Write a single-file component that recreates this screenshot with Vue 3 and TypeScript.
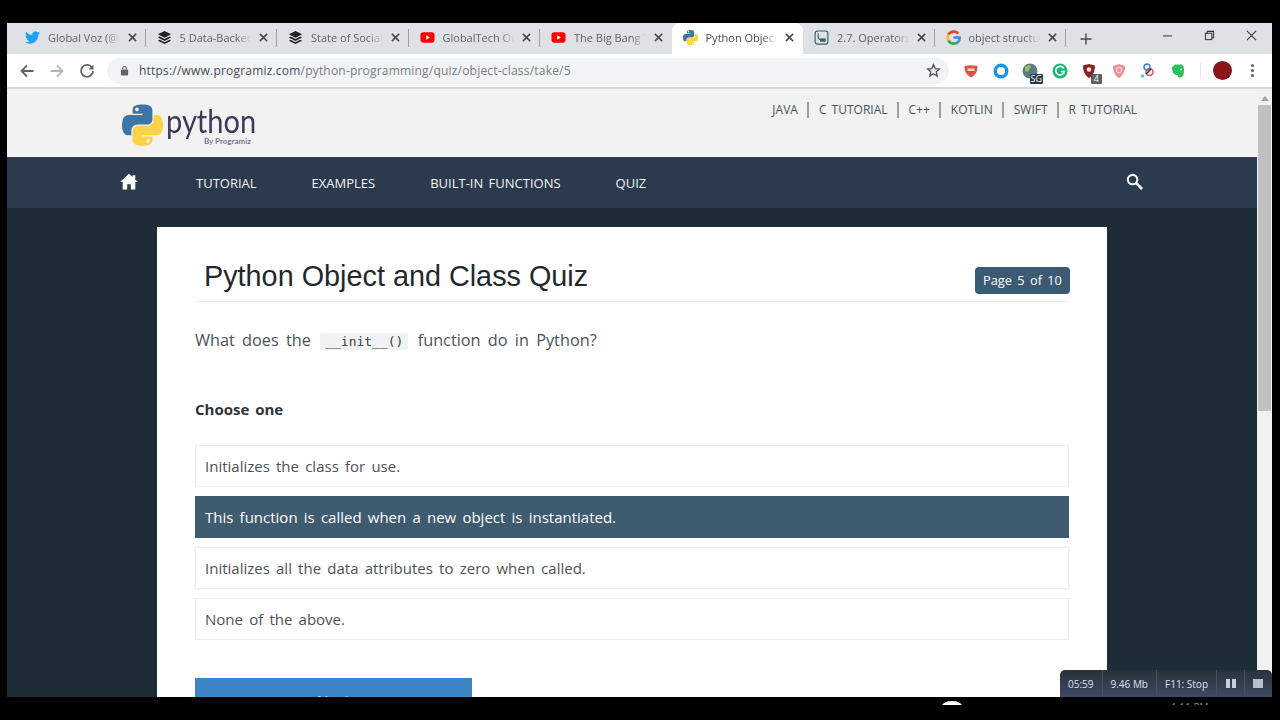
<script setup lang="ts">
interface Tab {
  title: string
  icon: string
  active?: boolean
}

const tabs: Tab[] = [
  { title: 'Global Voz (@GlobalVoz)', icon: 'twitter' },
  { title: '5 Data-Backed Tips', icon: 'layers' },
  { title: 'State of Social Media', icon: 'layers' },
  { title: 'GlobalTech Online', icon: 'youtube' },
  { title: 'The Big Bang Theory', icon: 'youtube' },
  { title: 'Python Object and Class', icon: 'python', active: true },
  { title: '2.7. Operators and', icon: 'book' },
  { title: 'object structure python', icon: 'google' }
]

const topLinks = ['JAVA', 'C TUTORIAL', 'C++', 'KOTLIN', 'SWIFT', 'R TUTORIAL']
const navLinks = ['TUTORIAL', 'EXAMPLES', 'BUILT-IN FUNCTIONS', 'QUIZ']
const answers = [
  'Initializes the class for use.',
  'This function is called when a new object is instantiated.',
  'Initializes all the data attributes to zero when called.',
  'None of the above.'
]
const selected = 1

const pyBlue = 'M54.9 0c-4.6 0-9 .4-12.8 1.1C30.8 3.1 28.7 7.3 28.7 15v10.2h26.8v3.4H18.6c-7.8 0-14.6 4.7-16.7 13.6-2.5 10.2-2.6 16.6 0 27.2 1.9 8 6.5 13.6 14.2 13.6h9.2V71c0-8.8 7.7-16.6 16.8-16.6h26.8c7.4 0 13.4-6.1 13.4-13.6V15c0-7.3-6.1-12.7-13.4-13.9C64.3.3 59.5 0 54.9 0zM40.4 8.2c2.8 0 5 2.3 5 5.1 0 2.8-2.3 5.1-5 5.1-2.8 0-5-2.3-5-5.1 0-2.8 2.3-5.1 5-5.1z'
const pyYellow = 'M85.6 28.7v11.9c0 9.2-7.8 17-16.7 17H42.1c-7.3 0-13.4 6.3-13.4 13.6v25.5c0 7.3 6.3 11.5 13.4 13.6 8.5 2.5 16.6 2.9 26.8 0 6.7-2 13.4-5.9 13.4-13.6V86.5H55.5v-3.4h40.2c7.8 0 10.7-5.4 13.4-13.6 2.8-8.4 2.7-16.5 0-27.2-1.9-7.8-5.6-13.6-13.4-13.6H85.6zM70.6 93.3c2.8 0 5 2.3 5 5.1 0 2.8-2.3 5.1-5 5.1-2.8 0-5-2.3-5-5.1 0-2.8 2.3-5.1 5-5.1z'
</script>

<template>
  <div class="screen">
    <div class="tabstrip">
      <div v-for="tab in tabs" :key="tab.title" class="tab" :class="{ 'tab-active': tab.active }">
        <svg class="favicon" viewBox="0 0 16 16">
          <path v-if="tab.icon === 'twitter'" fill="#1da1f2" d="M16 3c-.6.3-1.2.4-1.9.5.7-.4 1.2-1 1.4-1.8-.6.4-1.3.7-2.1.8A3.3 3.3 0 0 0 7.8 5.5 9.300 9.300 0 0 1 1.100 2.100a3.300 3.300 0 0 0 1 4.400c-.5 0-1-.2-1.500-.4 0 1.600 1.100 3 2.600 3.300-.5.1-1 .1-1.500 0 .4 1.300 1.600 2.200 3.100 2.300A6.600 6.600 0 0 1 0 13a9.300 9.300 0 0 0 14.300-8.300c.7-.4 1.200-1 1.700-1.700z" />
          <g v-else-if="tab.icon === 'layers'" fill="#222">
            <path d="M8 1 1 4.600 8 8.200l7-3.600z" />
            <path d="M2.800 7 1 8l7 3.600L15 8l-1.800-1L8 9.700z" />
            <path d="M2.800 10.400 1 11.400 8 15l7-3.600-1.800-1L8 13.100z" />
          </g>
          <g v-else-if="tab.icon === 'youtube'">
            <rect x="0.500" y="2.500" width="15" height="11" rx="3" fill="#f00" />
            <path d="M6.500 5.500v5l4.200-2.500z" fill="#fff" />
          </g>
          <g v-else-if="tab.icon === 'python'" transform="scale(.145)">
            <path :d="pyBlue" fill="#3a76a8" />
            <path :d="pyYellow" fill="#fcd346" />
          </g>
          <g v-else-if="tab.icon === 'book'" fill="none" stroke="#35606a" stroke-width="1.200">
            <rect x="1.200" y="1" width="13.600" height="14" rx="2.500" />
            <path d="M4.500 3.500v5l2 2" />
            <rect x="6.500" y="9" width="6" height="3.500" fill="#35606a" stroke="none" />
          </g>
          <g v-else fill="none" stroke-width="2.800">
            <path d="M13 3.700A6.600 6.600 0 0 0 2.500 5" stroke="#ea4335" />
            <path d="M2.500 5a6.600 6.600 0 0 0 0 6" stroke="#fbbc05" />
            <path d="M2.500 11A6.600 6.600 0 0 0 13 12.600" stroke="#34a853" />
            <path d="M13 12.600c1.200-1.100 1.700-2.700 1.500-4.600H8" stroke="#4285f4" />
          </g>
        </svg>
        <span class="tab-title">{{ tab.title }}</span>
        <svg class="tab-close" viewBox="0 0 10 10">
          <path d="M1 1l8 8M9 1 1 9" stroke="#45484d" stroke-width="1.700" />
        </svg>
      </div>
      <svg class="new-tab" viewBox="0 0 12 12">
        <path d="M6 .5v11M.5 6h11" stroke="#45484d" stroke-width="1.400" />
      </svg>
      <div class="window-controls">
        <svg viewBox="0 0 12 12"><path d="M1 6.500h10" stroke="#45484d" stroke-width="1.200" /></svg>
        <svg viewBox="0 0 12 12" fill="none" stroke="#333" stroke-width="1.100">
          <rect x="1.500" y="3.500" width="7" height="7" />
          <path d="M3.500 3.500v-2h7v7h-2" />
        </svg>
        <svg viewBox="0 0 12 12"><path d="M1 1l10 10M11 1 1 11" stroke="#333" stroke-width="1.100" /></svg>
      </div>
    </div>

    <div class="toolbar">
      <svg class="tool" viewBox="0 0 16 16">
        <path d="M14.500 8H2.500M8 2.500 2.500 8 8 13.500" fill="none" stroke="#5f6368" stroke-width="1.800" />
      </svg>
      <svg class="tool" viewBox="0 0 16 16">
        <path d="M1.500 8h12M8 2.500 13.500 8 8 13.500" fill="none" stroke="#b3b5b8" stroke-width="1.800" />
      </svg>
      <svg class="tool" viewBox="0 0 16 16">
        <path d="M13 4.500A6 6 0 1 0 14 8" fill="none" stroke="#5f6368" stroke-width="1.800" />
        <path d="M14.500 1.500v5h-5z" fill="#5f6368" />
      </svg>
      <div class="omnibox">
        <svg class="lock" viewBox="0 0 10 12">
          <rect x="1" y="5" width="8" height="6.500" rx="1" fill="#5f6368" />
          <path d="M3 5V3.500a2 2 0 0 1 4 0V5" fill="none" stroke="#5f6368" stroke-width="1.200" />
        </svg>
        <span class="url"><span class="url-host">https://www.programiz.com</span>/python-programming/quiz/object-class/take/5</span>
        <svg class="star" viewBox="0 0 16 16">
          <path d="M8 1.800 9.800 6l4.600.4-3.500 3 1.100 4.500L8 11.500l-4 2.400 1.100-4.500-3.500-3L6.200 6z" fill="none" stroke="#4d5156" stroke-width="1.400" />
        </svg>
      </div>
      <div class="extensions">
        <svg viewBox="0 0 16 16">
          <path d="M1.500 3c4-1 9-1 13 0 0 5-1.500 9-6.500 11.500C3 12 1.500 8 1.500 3z" fill="#d9553f" />
          <path d="M4.500 5.500h7v2.500h-7z" fill="#f6d5cc" />
        </svg>
        <svg viewBox="0 0 16 16"><circle cx="8" cy="8" r="5.800" fill="none" stroke="#1296e8" stroke-width="3.400" /></svg>
        <div class="ext-badged">
          <svg viewBox="0 0 16 16">
            <circle cx="8" cy="8" r="7.500" fill="#5f7a80" />
            <path d="M3 4c2-2 5-2 6-1 0 2-2 2-2 4S4 9 3 8z" fill="#8fbd6b" />
          </svg>
          <span class="ext-badge ext-badge-sg">SG</span>
        </div>
        <svg viewBox="0 0 16 16">
          <circle cx="8" cy="8" r="7.500" fill="#15b96f" />
          <path d="M11.800 5.500A4.300 4.300 0 1 0 12.300 8.500H9" fill="none" stroke="#fff" stroke-width="1.700" />
        </svg>
        <div class="ext-badged">
          <svg viewBox="0 0 16 16">
            <path d="M2 2.500 8 1l6 1.500c0 6-2 10-6 12.500C4 12.500 2 8.500 2 2.500z" fill="#8e1f25" />
            <circle cx="8" cy="6.500" r="2.300" fill="#f5e9e9" />
          </svg>
          <span class="ext-badge ext-badge-num">4</span>
        </div>
        <svg viewBox="0 0 16 16">
          <path d="M2 3 8 1l6 2c0 6-2 9.500-6 12C4 12.500 2 9 2 3z" fill="#ee8f94" />
          <circle cx="8" cy="7" r="2.600" fill="none" stroke="#f8d6d8" stroke-width="1.200" />
        </svg>
        <svg viewBox="0 0 16 16" fill="none">
          <circle cx="7" cy="4" r="3" stroke="#4a80d0" stroke-width="1.500" />
          <circle cx="9.500" cy="9" r="3.500" stroke="#d9534f" stroke-width="1.500" />
          <circle cx="2.500" cy="13" r="1.800" fill="#5dc3c4" />
          <path d="M6 11 11 6" stroke="#27304a" stroke-width="1.500" />
        </svg>
        <svg viewBox="0 0 16 16">
          <path d="M5 1.500h5c3 0 4 2 4 5 0 4 0 7-3.500 8-2 .4-3-1-2.500-2.500C5 12 3 11 2.500 7.500L1.500 5z" fill="#2dbe60" />
          <circle cx="11" cy="6.500" r="1" fill="#fff" />
        </svg>
      </div>
      <span class="toolbar-sep"></span>
      <span class="avatar"></span>
      <span class="menu-dots"><i></i><i></i><i></i></span>
    </div>

    <div class="page">
      <div class="content">
        <header class="site-head">
          <div class="logo">
            <svg class="logo-mark" viewBox="0 0 111 111">
              <path :d="pyBlue" fill="#3a76a8" />
              <path :d="pyYellow" fill="#fcd346" />
            </svg>
            <div class="logo-text">
              <span class="logo-word">python</span>
              <span class="logo-by">By Programiz</span>
            </div>
          </div>
          <nav class="top-links">
            <a v-for="link in topLinks" :key="link">{{ link }}</a>
          </nav>
        </header>

        <nav class="main-nav">
          <svg class="home" viewBox="0 0 20 18">
            <path d="M10 .5 0 9.500h3V18h5v-6h4v6h5V9.500h3l-3-2.700V2h-3v2z" fill="#fff" />
          </svg>
          <a v-for="link in navLinks" :key="link">{{ link }}</a>
          <svg class="search" viewBox="0 0 18 18">
            <circle cx="7" cy="7" r="5" fill="none" stroke="#fff" stroke-width="2.200" />
            <path d="m11 11 6 6" stroke="#fff" stroke-width="2.800" />
          </svg>
        </nav>

        <main class="stage">
          <section class="card">
            <div class="quiz-head">
              <h1>Python Object and Class Quiz</h1>
              <span class="page-badge">Page 5 of 10</span>
            </div>
            <p class="question">What does the <code>__init__()</code> function do in Python?</p>
            <p class="choose">Choose one</p>
            <ul class="answers">
              <li v-for="(answer, i) in answers" :key="answer" :class="{ 'answer-selected': i === selected }">
                {{ answer }}
              </li>
            </ul>
            <button type="button" class="next">Next</button>
          </section>
        </main>
      </div>

      <aside class="scrollbar">
        <svg viewBox="0 0 8 5"><path d="M4 0 8 5H0z" fill="#a3a3a3" /></svg>
        <span class="thumb"></span>
      </aside>

      <div class="recorder">
        <span>05:59</span>
        <span>9.46 Mb</span>
        <span>F11: Stop</span>
        <span class="rec-btn"><i></i><i></i></span>
        <span class="rec-btn"><b></b></span>
      </div>
    </div>
  </div>

  <div class="under">
    <span class="under-arc"></span>
    <span class="under-clock">1:11 PM</span>
  </div>
</template>

<style>
html,
body {
  margin: 0;
  background: #000;
  overflow: hidden;
}
</style>

<style scoped>
.screen {
  margin: 23px 0 0 7px;
  width: 1265px;
  height: 674px;
  display: flex;
  flex-direction: column;
  overflow: hidden;
  position: relative;
  font-family: 'Open Sans', sans-serif;
}

.tabstrip {
  height: 31px;
  flex-shrink: 0;
  background: #dee1e6;
  display: flex;
  align-items: flex-end;
  padding-left: 7px;
  position: relative;
}

.tab {
  width: 131.500px;
  height: 31px;
  box-sizing: border-box;
  display: flex;
  align-items: center;
  padding: 0 9px 2px 11px;
  position: relative;
  font-size: 11px;
  color: #5f6368;
}

.tab::after {
  content: '';
  position: absolute;
  right: 0;
  top: 6px;
  height: 18px;
  width: 1px;
  background: #9ea2a8;
}

.tab-active {
  background: #fff;
  border-radius: 8px 8px 0 0;
  color: #45484d;
}

.tab-active::after,
.tab:nth-child(5)::after {
  display: none;
}

.favicon {
  width: 15px;
  height: 15px;
  flex-shrink: 0;
  margin-right: 8px;
}

.tab-title {
  flex: 1;
  min-width: 0;
  white-space: nowrap;
  overflow: hidden;
  -webkit-mask-image: linear-gradient(90deg, #000 80%, transparent 100%);
  mask-image: linear-gradient(90deg, #000 80%, transparent 100%);
}

.tab-close {
  width: 9px;
  height: 9px;
  flex-shrink: 0;
  margin: 0 0 0 8px;
}

.new-tab {
  width: 12px;
  height: 12px;
  margin: 0 0 9px 14px;
}

.window-controls {
  margin-left: auto;
  align-self: flex-start;
  display: flex;
  gap: 31px;
  padding: 7px 15px 0 0;
}

.window-controls svg {
  width: 11px;
  height: 11px;
}

.toolbar {
  height: 33px;
  flex-shrink: 0;
  background: #fff;
  border-bottom: 2px solid #d6d8da;
  display: flex;
  align-items: center;
  padding-left: 12px;
}

.tool {
  width: 16px;
  height: 16px;
  margin-right: 14px;
}

.omnibox {
  margin-left: -2px;
  width: 842px;
  height: 26px;
  border-radius: 13px;
  background: #f1f3f4;
  display: flex;
  align-items: center;
  padding: 0 8px 0 13px;
  box-sizing: border-box;
}

.lock {
  width: 9px;
  height: 11px;
  margin-right: 10px;
}

.url {
  flex: 1;
  font-size: 12px;
  color: #7a7e83;
  letter-spacing: 0.200px;
}

.url-host {
  color: #4a4d52;
}

.star {
  width: 15px;
  height: 15px;
}

.extensions {
  display: flex;
  align-items: center;
  gap: 13.500px;
  margin-left: 14px;
}

.extensions svg {
  width: 16px;
  height: 16px;
  display: block;
}

.ext-badged {
  position: relative;
}

.ext-badge {
  position: absolute;
  right: -5px;
  bottom: -5px;
  font-size: 9px;
  line-height: 10px;
  color: #fff;
  padding: 0 1px;
  border-radius: 1px;
}

.ext-badge-sg {
  background: #263b4a;
}

.ext-badge-num {
  background: #5c5f61;
  padding: 0 3px;
}

.toolbar-sep {
  width: 1px;
  height: 16px;
  background: #e3e5e7;
  margin-left: 14px;
}

.avatar {
  width: 19px;
  height: 19px;
  border-radius: 50%;
  background: #8a1418;
  margin-left: 12px;
}

.menu-dots {
  display: flex;
  flex-direction: column;
  gap: 2px;
  margin-left: 19px;
}

.menu-dots i {
  width: 3px;
  height: 3px;
  border-radius: 50%;
  background: #5f6368;
}

.page {
  flex: 1;
  min-height: 0;
  display: flex;
  position: relative;
}

.content {
  flex: 1;
  min-width: 0;
  display: flex;
  flex-direction: column;
}

.site-head {
  height: 68px;
  box-sizing: border-box;
  flex-shrink: 0;
  background: #f1f2f1;
  display: flex;
  justify-content: space-between;
  align-items: flex-start;
  padding: 0 120px 0 115px;
}

.logo {
  display: flex;
  align-items: flex-start;
  padding-top: 15px;
}

.logo-mark {
  width: 41px;
  height: 42px;
}

.logo-text {
  display: flex;
  flex-direction: column;
  width: 87px;
  margin-left: 3px;
}

.logo-word {
  align-self: flex-start;
  font-family: Lato, sans-serif;
  font-size: 33px;
  line-height: 32px;
  color: #41395a;
  transform: scaleX(0.88);
  transform-origin: left center;
}

.logo-by {
  align-self: flex-end;
  font-family: Lato, sans-serif;
  font-size: 8px;
  line-height: 10px;
  font-weight: 700;
  color: #7b7691;
  margin-right: 2px;
}

.top-links {
  display: flex;
  padding-top: 13px;
}

.top-links a {
  font-size: 12px;
  line-height: 16px;
  color: #49525c;
  word-spacing: 2px;
  padding: 0 9.500px;
  border-left: 2px solid #a59f8e;
}

.top-links a:first-child {
  border-left: 0;
}

.top-links a:last-child {
  padding-right: 0;
}

.main-nav {
  height: 51px;
  flex-shrink: 0;
  background: #2b3a4d;
  display: flex;
  align-items: center;
  padding: 0 114px 0 113px;
  gap: 55px;
}

.main-nav a {
  font-size: 13px;
  color: #f2f4f5;
  word-spacing: 2px;
}

.home {
  width: 18px;
  height: 17px;
  margin-right: 3px;
  margin-top: -2px;
}

.search {
  width: 17px;
  height: 17px;
  margin-left: auto;
  margin-top: -2px;
}

.stage {
  flex: 1;
  min-height: 0;
  background: #1e2c35;
  padding: 19px 150px 0;
  overflow: hidden;
}

.card {
  background: #fff;
  height: 600px;
  padding: 0 38px;
  box-sizing: border-box;
}

.quiz-head {
  height: 75px;
  box-sizing: border-box;
  border-bottom: 1px solid #eee;
  display: flex;
  justify-content: space-between;
  align-items: flex-end;
  padding: 0 0 7px 9px;
}

h1 {
  margin: 0;
  font-family: 'Liberation Sans', Arial, sans-serif;
  font-weight: 400;
  font-size: 28.800px;
  line-height: 36px;
  color: #23282d;
}

.page-badge {
  width: 95px;
  height: 27px;
  margin-right: -1px;
  box-sizing: border-box;
  background: #3b5a73;
  color: #fff;
  font-size: 12.800px;
  line-height: 27px;
  text-align: center;
  word-spacing: 2px;
  border-radius: 4px;
}

.question {
  margin: 26px 0 0;
  font-size: 16.300px;
  line-height: 24px;
  color: #4d5257;
  word-spacing: 3px;
}

code {
  font-family: 'DejaVu Sans Mono', monospace;
  font-size: 13px;
  background: #f1f2f2;
  color: #3c4043;
  padding: 1px 5px;
  border-radius: 2px;
  margin: 0 2px;
}

.choose {
  margin: 44px 0 0;
  font-size: 15px;
  line-height: 22px;
  font-weight: 700;
  color: #2d3338;
  word-spacing: 2px;
}

.answers {
  list-style: none;
  margin: 25px 0 0;
  padding: 0;
  display: flex;
  flex-direction: column;
  gap: 9.500px;
}

.answers li {
  height: 41.500px;
  box-sizing: border-box;
  border: 1px solid #eceded;
  padding: 0 9px;
  display: flex;
  align-items: center;
  font-size: 15px;
  color: #4d5257;
  word-spacing: 2.300px;
}

.answers li.answer-selected {
  background: #3f5b70;
  border-color: #3f5b70;
  color: #fff;
}

.next {
  display: block;
  width: 277px;
  height: 44px;
  margin-top: 38px;
  border: 0;
  background: #3d85c6;
  color: #fff;
  font-family: inherit;
  font-size: 15px;
}

.scrollbar {
  width: 15px;
  flex-shrink: 0;
  background: #f1f1f1;
  display: flex;
  flex-direction: column;
  align-items: center;
}

.scrollbar svg {
  width: 8px;
  height: 5px;
  margin-top: 7px;
  flex-shrink: 0;
}

.thumb {
  width: 13px;
  height: 306px;
  margin-top: 4px;
  background: #c1c1c1;
}

.recorder {
  position: absolute;
  right: 0;
  bottom: 0;
  width: 212px;
  height: 27px;
  box-sizing: border-box;
  display: flex;
  align-items: center;
  border-radius: 5px 5px 0 0;
  background: linear-gradient(#29323b, #3c4a63);
  color: #dfe3e8;
  font-size: 10px;
  font-family: 'Open Sans', sans-serif;
}

.recorder span {
  height: 100%;
  display: flex;
  align-items: center;
  justify-content: center;
  padding: 0 8px;
  border-left: 1px solid #46505c;
  white-space: nowrap;
}

.recorder span:first-child {
  border-left: 0;
}

.rec-btn {
  gap: 2px;
  width: 29px;
  box-sizing: border-box;
}

.rec-btn i {
  width: 4px;
  height: 9px;
  background: #c9d0d8;
}

.rec-btn b {
  width: 10px;
  height: 9px;
  background: #b8bec6;
}

.under {
  height: 8px;
  position: relative;
  overflow: hidden;
}

.under-arc {
  position: absolute;
  left: 942px;
  top: 4px;
  width: 20px;
  height: 10px;
  border-radius: 50%;
  background: #fff;
}

.under-clock {
  position: absolute;
  left: 1171px;
  top: 4px;
  font-family: 'Open Sans', sans-serif;
  font-size: 10px;
  line-height: 12px;
  color: #888;
}
</style>
